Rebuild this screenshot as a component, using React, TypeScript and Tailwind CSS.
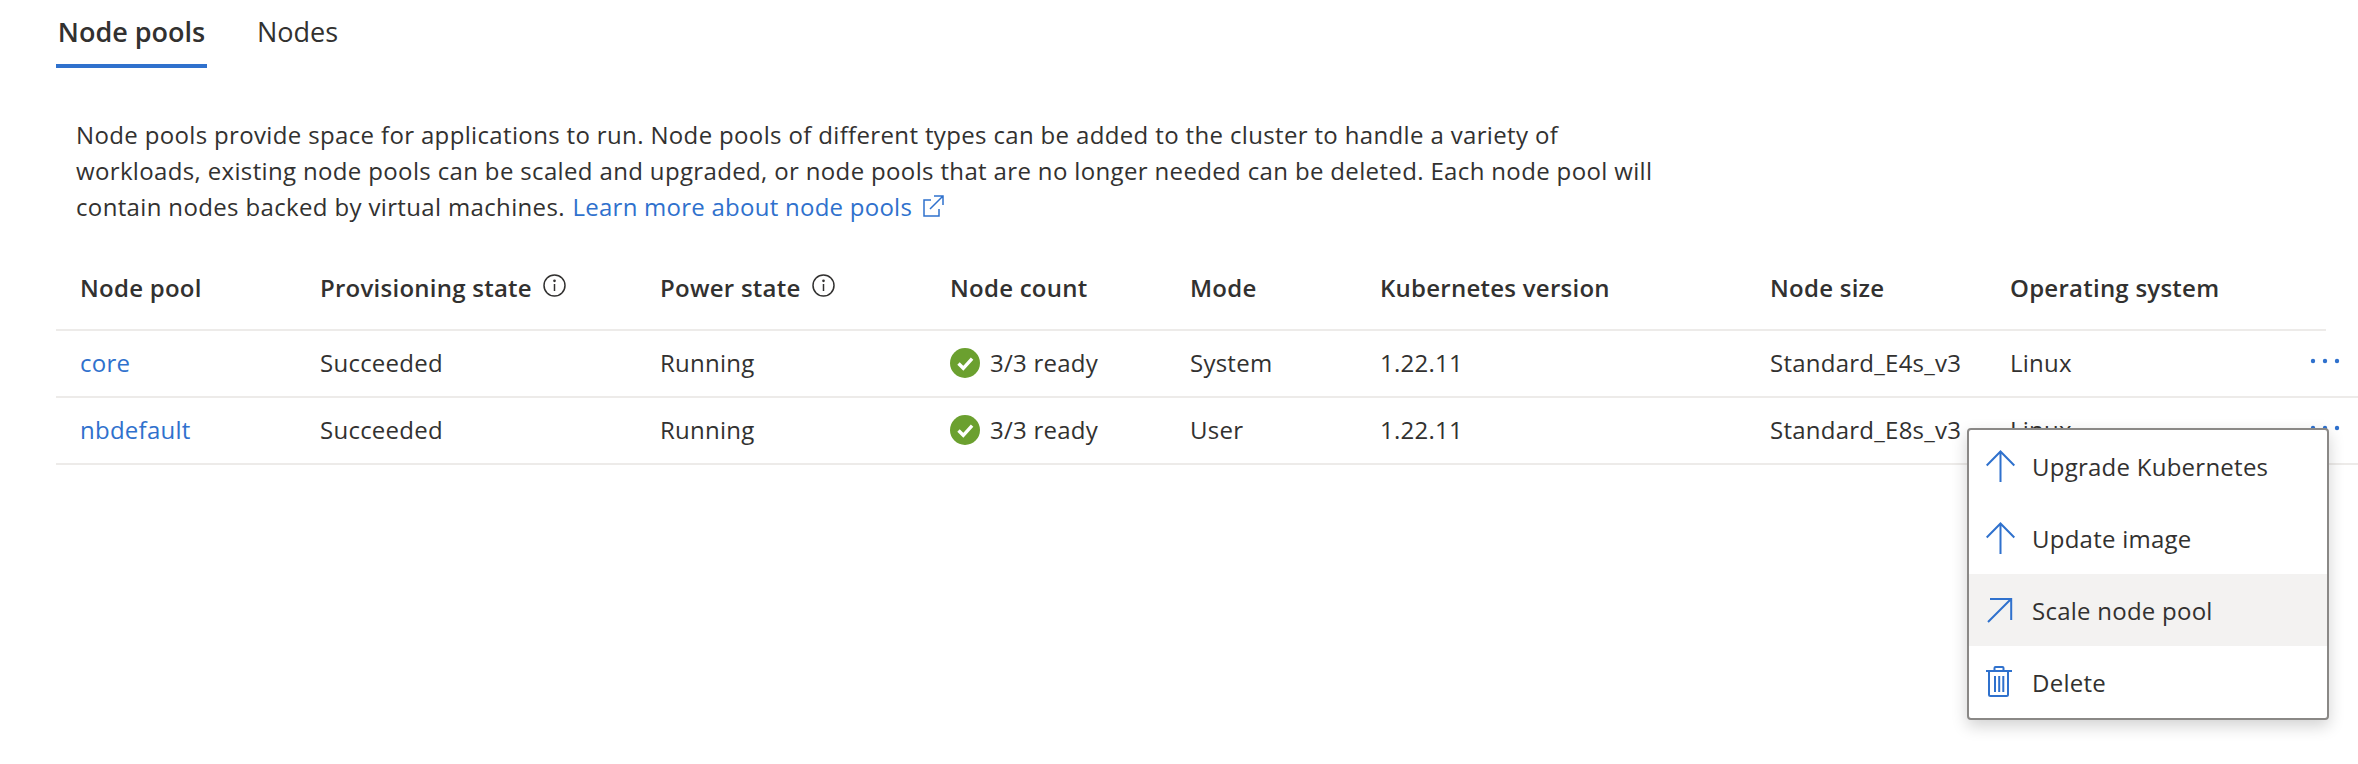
import React from 'react';

const FONT = "font-['Open_Sans','Noto_Sans',sans-serif]";

const columns = 'grid grid-cols-[264px_340px_290px_240px_190px_390px_240px_1fr] items-center';

const rows = [
  { name: 'core', mode: 'System', size: 'Standard_E4s_v3' },
  { name: 'nbdefault', mode: 'User', size: 'Standard_E8s_v3' },
];

const InfoIcon = () => (
  <svg width="23" height="23" viewBox="0 0 23 23" fill="none" stroke="#323130" strokeWidth="1.5" className="ml-[11px] -mt-[5px] shrink-0">
    <circle cx="11.5" cy="11.5" r="10.5" />
    <path d="M11.5 10v7" />
    <circle cx="11.5" cy="6.8" r="0.6" fill="#323130" />
  </svg>
);

const CheckCircle = () => (
  <svg width="30" height="30" viewBox="0 0 30 30" className="shrink-0">
    <circle cx="15" cy="15" r="15" fill="#6ba02f" />
    <path d="M8.5 15.5l4.8 4.8 8.8-9.6" fill="none" stroke="#fff" strokeWidth="3.4" />
  </svg>
);

const Dots = () => (
  <svg width="32" height="6" viewBox="0 0 32 6" className="absolute left-[2310px] top-[30px] -translate-y-1/2" fill="#2f71cd">
    <circle cx="3" cy="3" r="2.2" />
    <circle cx="15" cy="3" r="2.2" />
    <circle cx="27" cy="3" r="2.2" />
  </svg>
);

const ArrowUp = () => (
  <svg width="30" height="32" viewBox="0 0 30 32" fill="none" stroke="#2f71cd" strokeWidth="2">
    <path d="M14.5 32V1.5M0.700 15.500L14.5 1.500l13.800 14" />
  </svg>
);

const ArrowDiagonal = () => (
  <svg width="30" height="32" viewBox="0 0 30 32" fill="none" stroke="#2f71cd" strokeWidth="2">
    <path d="M2 28L25 5M4 5H25.200V26" />
  </svg>
);

const TrashIcon = () => (
  <svg width="30" height="32" viewBox="0 0 30 32" fill="none" stroke="#2f71cd" strokeWidth="2">
    <path d="M0 5h26M8.500 5V2a1 1 0 0 1 1-1h7a1 1 0 0 1 1 1v3M3 5v23.500a1.500 1.500 0 0 0 1.500 1.500h16a1.500 1.500 0 0 0 1.500-1.500V5M9 10v16M13.200 10v16M17.300 10v16" />
  </svg>
);

const menuItems = [
  { label: 'Upgrade Kubernetes', icon: <ArrowUp /> },
  { label: 'Update image', icon: <ArrowUp /> },
  { label: 'Scale node pool', icon: <ArrowDiagonal />, active: true },
  { label: 'Delete', icon: <TrashIcon /> },
];

export default function App() {
  return (
    <div className={`relative h-[764px] w-[2358px] overflow-hidden bg-white text-[24px] leading-[36px] tracking-[0.25px] text-[#323130] ${FONT}`}>
      {/* Tabs */}
      <div className="flex h-[68px] pl-[56px] text-[27px] tracking-normal">
        <div className="flex w-[151px] justify-center border-b-4 border-[#2f71cd] pt-[14px] font-semibold">Node pools</div>
        <div className="ml-[50px] pt-[14px]">Nodes</div>
      </div>

      {/* Description */}
      <p className="mt-[49px] whitespace-nowrap pl-[76px] tracking-[0.35px]">
        Node pools provide space for applications to run. Node pools of different types can be added to the cluster to handle a variety of
        <br />
        workloads, existing node pools can be scaled and upgraded, or node pools that are no longer needed can be deleted. Each node pool will
        <br />
        contain nodes backed by virtual machines.{' '}
        <a className="ml-[1px] tracking-[0.25px] text-[#2f71cd]">Learn more about node pools</a>
        <svg width="22" height="22" viewBox="0 0 22 22" fill="none" stroke="#2f71cd" strokeWidth="1.5" className="ml-[10px] inline-block align-[-1px]">
          <path d="M9 5H2v16h15v-7M12 1h9v9M21 1L8 14" />
        </svg>
      </p>

      {/* Table */}
      <div className="ml-[56px] mt-[43px] w-[2270px]">
        <div className={`${columns} h-[63px] border-b-2 border-[#edebe9] pb-[22px] font-semibold`}>
          <div className="pl-[24px]">Node pool</div>
          <div className="flex items-center">Provisioning state<InfoIcon /></div>
          <div className="flex items-center">Power state<InfoIcon /></div>
          <div>Node count</div>
          <div>Mode</div>
          <div>Kubernetes version</div>
          <div>Node size</div>
          <div>Operating system</div>
        </div>
      </div>
      {rows.map((row) => (
        <div key={row.name} className="relative h-[67px] pl-[56px]">
          <div className={`${columns} h-[67px] border-b-2 border-[#edebe9] pb-[2px]`}>
            <div className="pl-[24px] text-[#2f71cd]">{row.name}</div>
            <div>Succeeded</div>
            <div>Running</div>
            <div className="flex items-center gap-[10px]"><CheckCircle />3/3 ready</div>
            <div>{row.mode}</div>
            <div>1.22.11</div>
            <div>{row.size}</div>
            <div>Linux</div>
          </div>
          <Dots />
        </div>
      ))}

      {/* Context menu */}
      <div className="absolute left-[1967px] top-[428px] w-[362px] rounded-[4px] border-2 border-[#8a8886] bg-white shadow-[0_6px_16px_rgba(0,0,0,0.18)]">
        {menuItems.map((item) => (
          <div key={item.label} className={`flex h-[72px] items-center pl-[17px] ${item.active ? 'bg-[#f3f2f1]' : ''}`}>
            {item.icon}
            <span className="ml-[16px] pt-[2px]">{item.label}</span>
          </div>
        ))}
      </div>
    </div>
  );
}
